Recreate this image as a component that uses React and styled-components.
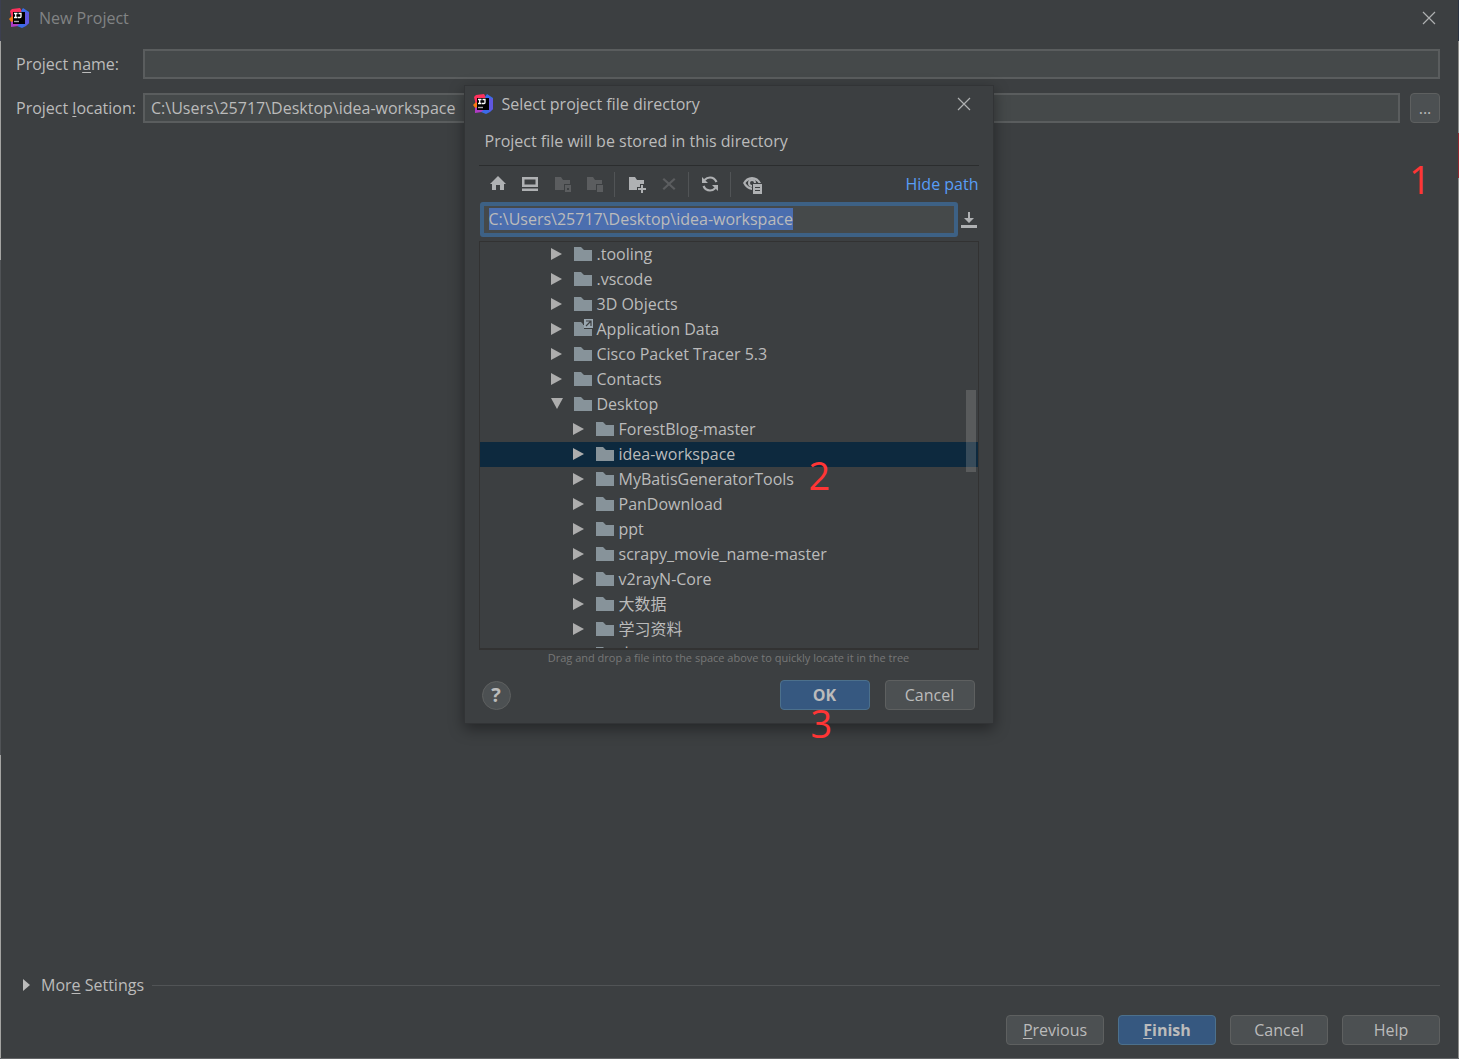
import styled, { createGlobalStyle, css } from "styled-components";

const text = "#bbbbbb";
const panel = "#3c3f41";

const GlobalStyle = createGlobalStyle`
  * {
    box-sizing: border-box;
  }
  body {
    margin: 0;
    background: ${panel};
    color: ${text};
    font-family: "Open Sans", "Noto Sans CJK SC", sans-serif;
    font-size: 16px;
    line-height: 20px;
  }
  button,
  input {
    font: inherit;
    color: inherit;
  }
`;

const folders = [
  { name: ".tooling" },
  { name: ".vscode" },
  { name: "3D Objects" },
  { name: "Application Data", link: true },
  { name: "Cisco Packet Tracer 5.3" },
  { name: "Contacts" },
  { name: "Desktop", open: true },
  { name: "ForestBlog-master", nested: true },
  { name: "idea-workspace", nested: true, selected: true },
  { name: "MyBatisGeneratorTools", nested: true },
  { name: "PanDownload", nested: true },
  { name: "ppt", nested: true },
  { name: "scrapy_movie_name-master", nested: true },
  { name: "v2rayN-Core", nested: true },
  { name: "大数据", nested: true },
  { name: "学习资料", nested: true },
  { name: "小", nested: true },
];

const Logo = () => (
  <svg width="20" height="20" viewBox="0 0 20 20" aria-hidden="true">
    <path d="M1 3 3 1l8-1 4 7-7 7-6 4 1-7-1-4z" fill="#fe315d" />
    <path d="M0 11 3 8l3 4-3 3z" fill="#f97a12" />
    <path d="M2 14 8 12l5 5-4 1-7 1z" fill="#b03bc4" />
    <path d="M12 3 14 0l6 4v11l-3 3-4 2-5-2 8-6z" fill="#3b6be8" />
    <path d="m16 4 4 1v10l-4 3z" fill="#6057e0" />
    <rect x="4" y="4" width="12" height="12" fill="#000" />
    <path
      d="M5 5.500h3.500M6.700 5.500v4M5 9.500h3.500M9.500 5.500h2.500v3q0 1-1 1H9"
      fill="none"
      stroke="#fff"
      strokeWidth="1.300"
    />
    <path d="M5 13.500h5" stroke="#aaa" strokeWidth="1.400" />
  </svg>
);

const Cross = () => (
  <svg width="14" height="14" viewBox="0 0 14 14" aria-hidden="true">
    <path d="m1 1 12 12M13 1 1 13" stroke="currentColor" strokeWidth="1.200" />
  </svg>
);

const Arrow = ({ open }) => (
  <svg width="12" height="12" viewBox="0 0 12 12" aria-hidden="true">
    <path d={open ? "M0 0h12L6 11z" : "M0 0v12l11-6z"} fill="#adadad" />
  </svg>
);

const Folder = ({ link }) => (
  <svg width="20" height="20" viewBox="0 0 20 20" aria-hidden="true">
    <path d="M1 3h7l3 3h8v11H1z" fill="#87939a" />
    {link && (
      <>
        <path d="M10 0h10v10H10z" fill={panel} />
        <path d="M1 6h10v4h8v7H1z" fill="#87939a" />
        <path d="M11 0h9v9h-9z" fill="#9aa7b0" />
        <path
          d="M13 2h5v5M18 2l-5 5"
          fill="none"
          stroke="#3c3f41"
          strokeWidth="1.200"
        />
      </>
    )}
  </svg>
);

const toolIcons = {
  Home: <path d="m10 2 8 8h-2v6h-4v-5H8v5H4v-6H2z" />,
  "Desktop directory": (
    <path d="M2 3h16v10H2zM4.500 5.500v5h11v-5zM2 14.500h16V17H2z" fillRule="evenodd" />
  ),
  "Project directory": (
    <path
      d="M3 3h6l2 3h7v4h-6v6H3zM13 11h6v7h-6zM15 14v2h2v-2z"
      fillRule="evenodd"
    />
  ),
  "Module directory": <path d="M3 3h6l2 3h7v4h-6v6H3zM13 11h6v7h-6z" />,
  "New folder": <path d="M3 3h6l2 3h7v4h-4v3h-3v3H3zM15 11h2v3h3v2h-3v3h-2v-3h-3v-2h3z" />,
  Delete: <path d="m6 4 5 4.500L16 4l1.500 1.500-5 4.500 5 4.500L16 16l-5-4.500L6 16l-1.500-1.500 5-4.500-5-4.500z" />,
  Refresh: (
    <g fill="none" stroke="currentColor" strokeWidth="2.200">
      <path d="M4.500 6Q7 3.500 10 3.500q4.500 0 6.500 4.500M15.500 14Q13 16.500 10 16.500q-4.500 0-6.500-4.500" />
      <path d="M2 3v6h6zM18 17v-6h-6z" fill="currentColor" stroke="none" />
    </g>
  ),
  "Show hidden files": (
    <>
      <path
        d="M10 16Q4 15 1 9q3-6 9-6t9 6h-2.500Q14 5.500 10 5.500T3.500 9Q6 13 10 13.500z"
      />
      <circle cx="10" cy="9" r="3" fill="none" stroke="currentColor" strokeWidth="2" />
      <path d="M10 9h10v11H10z" fill={panel} />
      <path d="M11 10h9v10h-9zm2 3v1h5v-1zm0 3v1h5v-1z" fillRule="evenodd" />
    </>
  ),
};

const ToolButton = ({ name, disabled }) => (
  <IconButton type="button" aria-label={name} disabled={disabled}>
    <svg width="20" height="20" viewBox="0 0 20 20" fill="currentColor">
      {toolIcons[name]}
    </svg>
  </IconButton>
);

const DirectoryDialog = () => (
  <Dialog role="dialog" aria-labelledby="dialog-title">
    <DialogTitle>
      <Logo />
      <h2 id="dialog-title">Select project file directory</h2>
      <CloseButton type="button" aria-label="Close dialog">
        <Cross />
      </CloseButton>
    </DialogTitle>
    <Description>Project file will be stored in this directory</Description>
    <Toolbar>
      <ToolButton name="Home" />
      <ToolButton name="Desktop directory" />
      <ToolButton name="Project directory" disabled />
      <ToolButton name="Module directory" disabled />
      <Separator />
      <ToolButton name="New folder" />
      <ToolButton name="Delete" disabled />
      <Separator />
      <ToolButton name="Refresh" />
      <Separator />
      <ToolButton name="Show hidden files" />
      <a href="#path">Hide path</a>
    </Toolbar>
    <PathRow id="path">
      <PathField>
        <PathInput
          aria-label="Path"
          defaultValue="C:\Users\25717\Desktop\idea-workspace"
          autoFocus
          onFocus={(e) => e.target.select()}
        />
      </PathField>
      <HistoryButton type="button" aria-label="Recent paths">
        <svg width="16" height="16" viewBox="0 0 16 16" fill="currentColor">
          <path d="M7 0h2v6h4l-5 5-5-5h4zM0 13h16v3H0z" />
        </svg>
      </HistoryButton>
    </PathRow>
    <Tree>
      <ul>
        {folders.map((folder) => (
          <TreeRow
            key={folder.name}
            $nested={folder.nested}
            $selected={folder.selected}
          >
            <Arrow open={folder.open} />
            <Folder link={folder.link} />
            <span>{folder.name}</span>
          </TreeRow>
        ))}
      </ul>
      <Thumb />
    </Tree>
    <Hint>
      Drag and drop a file into the space above to quickly locate it in the tree
    </Hint>
    <DialogActions>
      <HelpButton type="button" aria-label="Help">
        ?
      </HelpButton>
      <Button type="button" $primary>
        OK
        <Mark $left="30px" $top="22px">3</Mark>
      </Button>
      <Button type="button">Cancel</Button>
    </DialogActions>
    <Mark $left="344px" $top="369px">2</Mark>
  </Dialog>
);

const App = () => (
  <Window>
    <GlobalStyle />
    <TitleBar>
      <Logo />
      <h1>New Project</h1>
      <CloseButton type="button" aria-label="Close">
        <Cross />
      </CloseButton>
    </TitleBar>
    <Form>
      <label htmlFor="name">
        Project n<u>a</u>me:
      </label>
      <Field id="name" />
      <label htmlFor="location">
        Project <u>l</u>ocation:
      </label>
      <LocationRow>
        <Field
          id="location"
          defaultValue="C:\Users\25717\Desktop\idea-workspace"
        />
        <BrowseButton type="button" aria-label="Browse">
          ...
          <Mark $left="-2px" $top="65px">1</Mark>
        </BrowseButton>
      </LocationRow>
    </Form>
    <MoreSettings type="button">
      <svg width="7" height="12" viewBox="0 0 7 12" aria-hidden="true">
        <path d="M0 0v12l7-6z" fill="#bbbbbb" />
      </svg>
      <span>
        Mor<u>e</u> Settings
      </span>
    </MoreSettings>
    <Actions>
      <Button type="button">
        <u>P</u>revious
      </Button>
      <Button type="button" $primary>
        <u>F</u>inish
      </Button>
      <Button type="button">Cancel</Button>
      <Button type="button">Help</Button>
    </Actions>
    <DirectoryDialog />
  </Window>
);
export default App;

const Window = styled.main`
  position: relative;
  min-height: 100vh;
  display: flex;
  flex-direction: column;
  padding: 0 1px;
  border-bottom: 1px solid #626466;
  /* slivers of the desktop on both sides of the window */
  background:
    linear-gradient(
        #3c3f50 41px,
        #a4a4a2 41px 260px,
        #505356 260px 755px,
        #a4a4a2 755px
      )
      left / 1px 100% no-repeat,
    linear-gradient(
        #2c3442 41px,
        #8e8e8c 41px 133px,
        #93282e 133px 178px,
        #8e8e8c 178px
      )
      right / 1px 100% no-repeat,
    ${panel};
  h1,
  h2 {
    margin: 0;
    font-size: 16px;
    font-weight: 400;
  }
  u {
    text-underline-offset: 2px;
  }
`;

const TitleBar = styled.header`
  display: flex;
  align-items: center;
  gap: 10px;
  height: 36px;
  padding: 0 22px 0 8px;
  color: #818384;
`;

const CloseButton = styled.button`
  display: flex;
  margin-left: auto;
  padding: 0;
  border: 0;
  background: none;
  color: #aeb0b1;
`;

const Form = styled.form`
  display: grid;
  grid-template-columns: 118px 1fr;
  align-items: center;
  gap: 14px 9px;
  padding: 13px 18px 0 15px;
  white-space: nowrap;
`;

const Field = styled.input`
  width: 100%;
  min-width: 0;
  height: 30px;
  padding: 0 6px;
  border: 2px solid #5a5d5e;
  background: #45494a;
  outline: none;
`;

const LocationRow = styled.div`
  display: flex;
  gap: 10px;
`;

const raised = css`
  border: 1px solid #5e6060;
  border-radius: 4px;
  background: #4c5052;
`;

const BrowseButton = styled.button`
  ${raised};
  position: relative;
  flex: none;
  width: 30px;
  height: 30px;
  padding: 0;
`;

const MoreSettings = styled.button`
  display: flex;
  align-items: center;
  margin-top: auto;
  padding: 0 18px 0 22px;
  border: 0;
  background: none;
  span {
    margin: 0 8px 0 11px;
  }
  &::after {
    content: "";
    flex: 1;
    height: 1px;
    background: #515456;
  }
`;

const Button = styled.button`
  ${raised};
  position: relative;
  min-width: 90px;
  height: 30px;
  padding: 0 12px;
  ${(props) =>
    props.$primary &&
    css`
      border-color: #4c708c;
      background: #365880;
      font-weight: 700;
    `}
`;

const Actions = styled.footer`
  display: flex;
  justify-content: flex-end;
  gap: 14px;
  padding: 20px 18px 13px;
  ${Button} {
    min-width: 98px;
  }
`;

const Dialog = styled.section`
  position: absolute;
  top: 85px;
  left: calc(50% - 266px);
  width: 530px;
  padding: 0 14px 13px;
  border: 1px solid #323436;
  background: ${panel};
  box-shadow: 0 5px 14px rgba(0, 0, 0, 0.4);
`;

const DialogTitle = styled.header`
  display: flex;
  align-items: center;
  gap: 9px;
  height: 36px;
  margin-left: -6px;
  padding-right: 8px;
`;

const Description = styled.p`
  margin: 0;
  padding: 9px 6px 14px;
  border-bottom: 1px solid #2b2d2e;
`;

const Toolbar = styled.div`
  display: flex;
  align-items: center;
  gap: 12px;
  height: 36px;
  padding-left: 9px;
  a {
    margin-left: auto;
    color: #589df6;
    text-decoration: none;
  }
`;

const IconButton = styled.button`
  display: flex;
  padding: 0;
  border: 0;
  background: none;
  color: #afb1b3;
  &:disabled {
    color: #5b5d5f;
  }
`;

const Separator = styled.i`
  width: 1px;
  height: 25px;
  margin: 0 -1px 0 -2px;
  background: #515456;
`;

const PathRow = styled.div`
  display: flex;
  align-items: center;
  gap: 3px;
  padding-left: 1px;
`;

const PathField = styled.div`
  flex: 1;
  height: 35px;
  padding: 2px 5px;
  border: 4px solid #3d6185;
  border-radius: 3px;
  background: #45494a;
`;

const PathInput = styled.input`
  display: block;
  width: 100%;
  height: 22px;
  padding: 0;
  border: 0;
  background: none;
  outline: none;
  &::selection {
    background: #4b6eaf;
    color: #bbbbbb;
  }
`;

const HistoryButton = styled(IconButton)`
  padding-right: 2px;
`;

const Tree = styled.div`
  position: relative;
  height: 409px;
  margin-top: 4px;
  border: 1px solid #323232;
  border-bottom-width: 2px;
  overflow: hidden;
  ul {
    margin: 0;
    padding: 0;
    list-style: none;
  }
`;

const TreeRow = styled.li`
  display: flex;
  align-items: center;
  height: 25px;
  padding: 0 0 1px ${(props) => (props.$nested ? 93 : 71)}px;
  background: ${(props) => (props.$selected ? "#0d293e" : "none")};
  span {
    margin-left: 4px;
  }
  svg + svg {
    margin-left: 10px;
  }
`;

const Thumb = styled.div`
  position: absolute;
  top: 148px;
  right: 2px;
  width: 10px;
  height: 82px;
  background: rgba(166, 166, 166, 0.28);
`;

const Hint = styled.p`
  margin: 0;
  color: #777777;
  font-size: 11px;
  line-height: 16px;
  text-align: center;
`;

const DialogActions = styled.footer`
  display: flex;
  align-items: center;
  gap: 15px;
  padding: 14px 4px 0 3px;
`;

const HelpButton = styled.button`
  ${raised};
  width: 29px;
  height: 29px;
  margin-right: auto;
  padding: 0;
  border-radius: 50%;
  font-size: 20px;
  font-weight: 700;
`;

const Mark = styled.span`
  position: absolute;
  left: ${(props) => props.$left};
  top: ${(props) => props.$top};
  color: #ff3535;
  font-size: 38px;
  font-weight: 400;
  line-height: 40px;
  pointer-events: none;
`;
